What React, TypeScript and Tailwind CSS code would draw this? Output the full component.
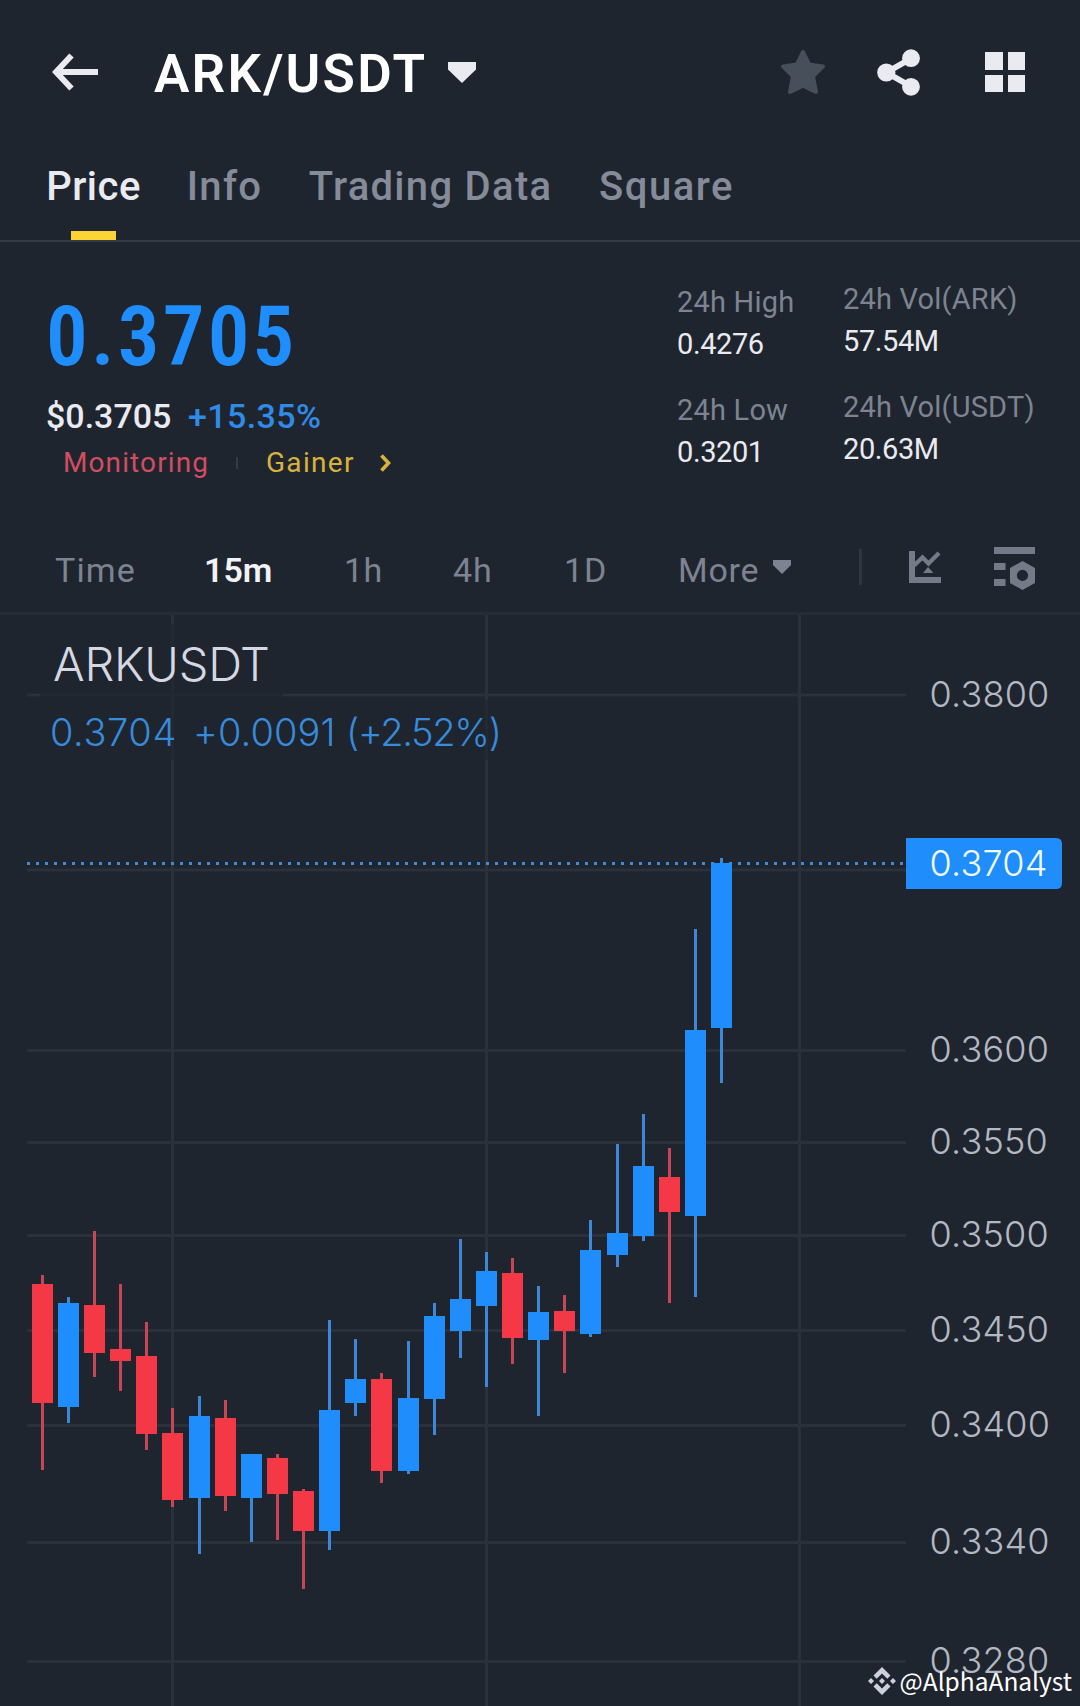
import React, { useState } from 'react';
import clsx from 'clsx';

interface Candle {
  x: number;
  up: boolean;
  high: number;
  top: number;
  bottom: number;
  low: number;
}

interface PriceLevel {
  label: string;
  y: number;
}

const UP = '#1f8dfb';
const DOWN = '#f43846';

// [x, up, high, body top, body bottom, low]
const rawCandles: [number, number, number, number, number, number][] = [
  [42.5, 0, 1275, 1284, 1403, 1470],
  [68.5, 1, 1297, 1303, 1407, 1423],
  [94.5, 0, 1231, 1305, 1353, 1377],
  [120.5, 0, 1284, 1349, 1361, 1391],
  [146.5, 0, 1322, 1356, 1434, 1450],
  [172.5, 0, 1408, 1433, 1500, 1507],
  [199.5, 1, 1396, 1416, 1498, 1554],
  [225.5, 0, 1400, 1418, 1496, 1511],
  [251.5, 1, 1454, 1454, 1498, 1542],
  [277.5, 0, 1454, 1458, 1494, 1540],
  [303.5, 0, 1489, 1491, 1531, 1589],
  [329.5, 1, 1320, 1410, 1531, 1550],
  [355.5, 1, 1339, 1379, 1403, 1416],
  [381.5, 0, 1373, 1379, 1471, 1483],
  [408.5, 1, 1341, 1398, 1471, 1474],
  [434.5, 1, 1303, 1316, 1399, 1435],
  [460.5, 1, 1239, 1299, 1331, 1358],
  [486.5, 1, 1252, 1271, 1306, 1387],
  [512.5, 0, 1258, 1273, 1338, 1364],
  [538.5, 1, 1286, 1312, 1340, 1416],
  [564.5, 0, 1295, 1311, 1331, 1373],
  [590.5, 1, 1220, 1250, 1334, 1337],
  [617.5, 1, 1144, 1233, 1255, 1267],
  [643.5, 1, 1114, 1166, 1236, 1241],
  [669.5, 0, 1148, 1177, 1212, 1303],
  [695.5, 1, 929, 1030, 1216, 1297],
  [721.5, 1, 858, 863, 1028, 1083],
];

const candles: Candle[] = rawCandles.map(([x, up, high, top, bottom, low]) => ({
  x,
  up: up === 1,
  high,
  top,
  bottom,
  low,
}));

const levels: PriceLevel[] = [
  { label: '0.3800', y: 695 },
  { label: '', y: 870 },
  { label: '0.3600', y: 1050.5 },
  { label: '0.3550', y: 1142.5 },
  { label: '0.3500', y: 1235.5 },
  { label: '0.3450', y: 1330.5 },
  { label: '0.3400', y: 1425.5 },
  { label: '0.3340', y: 1542.5 },
  { label: '0.3280', y: 1661.5 },
];

const timeLines = [172.5, 486.5, 799.5];

const tabs = [
  { name: 'Price', style: 'w-[93px] tracking-[0.5px]' },
  { name: 'Info', style: 'w-[75px] tracking-[1.3px]' },
  { name: 'Trading Data', style: 'w-[243px] tracking-[1.3px]' },
  { name: 'Square', style: 'w-[135px] tracking-[1.5px]' },
];

const intervals = [
  { name: 'Time', style: 'w-[149px] tracking-[1.1px]' },
  { name: '15m', style: 'w-[140px] tracking-normal' },
  { name: '1h', style: 'w-[109px] tracking-[0.5px]' },
  { name: '4h', style: 'w-[111px] tracking-[0.8px]' },
  { name: '1D', style: 'w-[114px] tracking-[1px]' },
];

function Header() {
  return (
    <header className="flex h-[144px] items-center pl-[52px] pr-[55px]">
      <button aria-label="Back">
        <svg width="46" height="38" viewBox="0 0 46 38" fill="none" stroke="#eaebf1" strokeWidth="6">
          <path d="M46 19H5M19.5 2.5L4 19L19.5 35.5" />
        </svg>
      </button>
      <button className="ml-[56px] flex items-center">
        <h1 className="w-[294px] pt-[5px] text-left text-[53px] leading-none font-semibold tracking-[2.2px] whitespace-nowrap text-white">
          ARK/USDT
        </h1>
        <svg width="28" height="21" viewBox="0 0 28 21" fill="#eaebf1">
          <path d="M0 0H28V7.5L14 21L0 7.5Z" />
        </svg>
      </button>
      <div className="ml-auto flex items-center">
        <svg width="46" height="46" viewBox="0 0 46 46" fill="#474f5b" stroke="#474f5b" strokeWidth="4" strokeLinejoin="round">
          <path d="M23 3L29.2 15.6L43 17.4L33 27.4L36 43L23 36.6L10 43L13 27.4L3 17.4L16.8 15.6Z" />
        </svg>
        <svg className="ml-[51px]" width="43" height="47" viewBox="0 0 43 47" fill="#eaebf1">
          <path d="M34 9.5L9.5 23.5L34 37.5" fill="none" stroke="#eaebf1" strokeWidth="6" />
          <circle cx="34" cy="9.2" r="8.9" />
          <circle cx="9.3" cy="23.5" r="9.1" />
          <circle cx="34" cy="37.8" r="8.9" />
        </svg>
        <div className="ml-[65px] grid grid-cols-2 gap-[5px]">
          {[0, 1, 2, 3].map((i) => (
            <span key={i} className="h-[17.5px] w-[17.5px] bg-[#eaebf1]" />
          ))}
        </div>
      </div>
    </header>
  );
}

function Tabs() {
  const [active, setActive] = useState('Price');

  return (
    <nav className="flex h-[98px] items-end gap-[47px] border-b-2 border-[#343a46] pl-[47px]">
      {tabs.map((tab) => (
        <button
          key={tab.name}
          onClick={() => setActive(tab.name)}
          className={clsx(
            'flex flex-col items-center text-[40px] leading-none font-medium whitespace-nowrap',
            tab.style,
            active === tab.name ? 'text-[#eaebf1]' : 'text-[#858b98]',
          )}
        >
          <span>{tab.name}</span>
          <span className={clsx('mt-[24px] h-[9px] w-[45px]', active === tab.name && 'bg-[#fbd535]')} />
        </button>
      ))}
    </nav>
  );
}

function Stat({ label, value }: { label: string; value: string }) {
  return (
    <div className="flex h-[108px] flex-col gap-[13px] text-[29px] leading-none whitespace-nowrap">
      <span className="tracking-[0.2px] text-[#7d8390]">{label}</span>
      <span className="tracking-[-0.4px] text-[#eaebf1]">{value}</span>
    </div>
  );
}

function Quote() {
  return (
    <section className="flex h-[286px] pl-[46px]">
      <div className="w-[631px] pt-[53px]">
        <div className="font-['Roboto_Condensed','Roboto',sans-serif] text-[83px] leading-none font-semibold tracking-[3.2px] text-[#1f8dfb]">
          0.3705
        </div>
        <div className="mt-[21px] flex text-[34px] leading-none font-medium">
          <span className="w-[142px] text-[#eaebf1]">$0.3705</span>
          <span className="tracking-[0.4px] text-[#2f8be6]">+15.35%</span>
        </div>
        <div className="mt-[16px] flex items-center pl-[17px] text-[28px] leading-none">
          <span className="w-[173px] tracking-[1.1px] text-[#d14d60]">Monitoring</span>
          <span className="h-[12px] w-[2px] bg-[#343a46]" />
          <span className="ml-[28px] w-[114px] tracking-[1.3px] text-[#d8b33c]">Gainer</span>
          <svg width="11" height="18" viewBox="0 0 11 18" fill="none" stroke="#d8b33c" strokeWidth="3.6">
            <path d="M1.5 1.5L8.5 9L1.5 16.5" />
          </svg>
        </div>
      </div>
      <div className="w-[166px] pt-[46px]">
        <Stat label="24h High" value="0.4276" />
        <Stat label="24h Low" value="0.3201" />
      </div>
      <div className="pt-[43px]">
        <Stat label="24h Vol(ARK)" value="57.54M" />
        <Stat label="24h Vol(USDT)" value="20.63M" />
      </div>
    </section>
  );
}

function IntervalBar() {
  const [active, setActive] = useState('15m');

  return (
    <div className="flex h-[87px] items-center border-b-3 border-[#262c37] pl-[55px] text-[34px] leading-none">
      {intervals.map((item) => (
        <button
          key={item.name}
          onClick={() => setActive(item.name)}
          className={clsx(
            'text-left whitespace-nowrap',
            item.style,
            active === item.name ? 'font-semibold text-[#f2f3f8]' : 'text-[#7d8390]',
          )}
        >
          {item.name}
        </button>
      ))}
      <button className="flex w-[181px] items-center text-[#7d8390]">
        <span className="w-[95px] text-left tracking-[0.7px]">More</span>
        <svg className="mb-[6px]" width="18" height="14" viewBox="0 0 18 14" fill="#7d8390">
          <path d="M0 0H18V5L9 14L0 5Z" />
        </svg>
      </button>
      <span className="mb-[6px] h-[36px] w-[3px] bg-[#2f3541]" />
      <svg className="mb-[6px] ml-[47px]" width="32" height="32" viewBox="0 0 32 32" fill="#747a88">
        <path d="M0 0H6V26H32V32H0Z" />
        <path d="M5 14.5L13.5 6.5L19.5 12.5L30 2" fill="none" stroke="#747a88" strokeWidth="4.2" />
        <path d="M19 16L24.5 22H14Z" />
      </svg>
      <svg className="mb-[3px] ml-[53px]" width="41" height="43" viewBox="0 0 41 43" fill="#747a88">
        <path d="M0 0H41V7H0ZM0 16H11.5V23H0ZM0 32H11.5V39H0Z" />
        <path fillRule="evenodd" d="M28.5 14L41 21V36L28.5 43L16 36V21ZM28.5 22.8A5.6 5.6 0 1 0 28.5 34A5.6 5.6 0 1 0 28.5 22.8Z" />
      </svg>
    </div>
  );
}

function Chart() {
  return (
    <div className="relative h-[1091px] overflow-hidden font-['Inter','Liberation_Sans',sans-serif] font-light">
      <svg className="block" width="1080" height="1091" viewBox="0 615 1080 1091">
        <g stroke="#2a313b" strokeWidth="3">
          {levels.map((level) => (
            <line key={level.y} x1="27" x2="906" y1={level.y} y2={level.y} />
          ))}
          {timeLines.map((x) => (
            <line key={x} x1={x} x2={x} y1="615" y2="1706" />
          ))}
        </g>
        <line x1="27" x2="906" y1="863.5" y2="863.5" stroke="#3f8cd8" strokeWidth="3" strokeDasharray="3 6" />
        {candles.map((c) => (
          <g key={c.x} shapeRendering="crispEdges">
            <rect x={c.x - 1.5} y={c.high} width="3" height={c.low - c.high} fill={c.up ? '#3a88d6' : '#c64655'} />
            <rect x={c.x - 10.5} y={c.top} width="21" height={c.bottom - c.top} fill={c.up ? UP : DOWN} />
          </g>
        ))}
        <path d="M906 838H1056Q1062 838 1062 844V883Q1062 889 1056 889H906Z" fill={UP} />
        <g fontSize="36" letterSpacing="0.2" fill="#b4b8c3">
          {levels.map((level) => (
            <text key={level.y} x="929.5" y={level.y + 11.5}>
              {level.label}
            </text>
          ))}
          <text x="929.5" y="876" fill="#f1fbff">
            0.3704
          </text>
        </g>
      </svg>

      <div className="absolute top-[9px] left-[40px] flex flex-col items-start whitespace-nowrap">
        <div className="h-[76px] w-[243px] bg-[#1f252f]/65 pt-[16px] pl-[13px] text-[47px] leading-none tracking-[-0.2px] text-[#d5d8e2]">
          ARKUSDT
        </div>
        <div className="flex h-[60px] w-[470px] bg-[#1f252f]/65 pt-[13px] pl-[10px] text-[38px] leading-none text-[#388ada]">
          <span className="w-[143px] tracking-[0.6px]">0.3704</span>
          <span className="w-[153px] tracking-[0.1px]">+0.0091</span>
          <span className="tracking-[-1.3px]">(+2.52%)</span>
        </div>
      </div>

      <div className="absolute right-[8px] bottom-[9px] flex items-center gap-[4px] font-['Noto_Sans_CJK_SC',sans-serif]">
        <svg width="28" height="28" viewBox="0 0 28 28" fill="#ced0df">
          <path d="M14 0L22.5 8.5L19.3 11.7L14 6.4L8.7 11.7L5.5 8.5Z" />
          <path d="M14 28L22.5 19.5L19.3 16.3L14 21.6L8.7 16.3L5.5 19.5Z" />
          <path d="M3 11L6 14L3 17L0 14ZM25 11L28 14L25 17L22 14ZM14 11L17 14L14 17L11 14Z" />
        </svg>
        <span className="text-[24.5px] leading-[32px] font-normal text-white">@AlphaAnalyst</span>
      </div>
    </div>
  );
}

function App() {
  return (
    <div className="w-[1080px] overflow-hidden bg-[#1f252f] font-['Roboto','Liberation_Sans',sans-serif]">
      <Header />
      <Tabs />
      <Quote />
      <IntervalBar />
      <Chart />
    </div>
  );
}

export default App;
